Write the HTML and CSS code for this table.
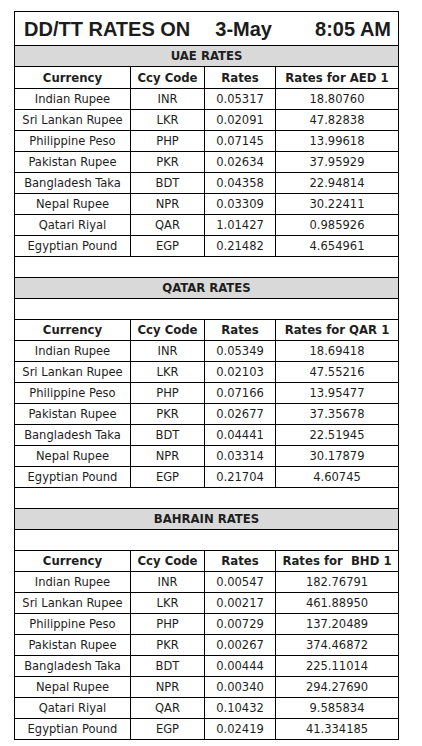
FILE: index.html
```html
<!DOCTYPE html>
<html>
<head>
<meta charset="utf-8">
<link rel="stylesheet" href="styles.css">
</head>
<body>
<table class="rates">
  <colgroup>
    <col class="c1"><col class="c2"><col class="c3"><col class="c4">
  </colgroup>
  <tr class="title-row">
    <td colspan="4" class="title">
      <div class="title-inner">
        <span>DD/TT RATES ON</span>
        <span class="date">3-May</span>
        <span class="time">8:05 AM</span>
      </div>
    </td>
  </tr>

  <tr class="sec"><td colspan="4">UAE RATES</td></tr>
  <tr class="head head-tall"><td>Currency</td><td>Ccy Code</td><td>Rates</td><td>Rates for AED 1</td></tr>
  <tr><td>Indian Rupee</td><td>INR</td><td>0.05317</td><td>18.80760</td></tr>
  <tr><td>Sri Lankan Rupee</td><td>LKR</td><td>0.02091</td><td>47.82838</td></tr>
  <tr><td>Philippine Peso</td><td>PHP</td><td>0.07145</td><td>13.99618</td></tr>
  <tr><td>Pakistan Rupee</td><td>PKR</td><td>0.02634</td><td>37.95929</td></tr>
  <tr><td>Bangladesh Taka</td><td>BDT</td><td>0.04358</td><td>22.94814</td></tr>
  <tr><td>Nepal Rupee</td><td>NPR</td><td>0.03309</td><td>30.22411</td></tr>
  <tr><td>Qatari Riyal</td><td>QAR</td><td>1.01427</td><td>0.985926</td></tr>
  <tr><td>Egyptian Pound</td><td>EGP</td><td>0.21482</td><td>4.654961</td></tr>
  <tr class="blank"><td colspan="4"></td></tr>

  <tr class="sec"><td colspan="4">QATAR RATES</td></tr>
  <tr class="blank"><td colspan="4"></td></tr>
  <tr class="head"><td>Currency</td><td>Ccy Code</td><td>Rates</td><td>Rates for QAR 1</td></tr>
  <tr><td>Indian Rupee</td><td>INR</td><td>0.05349</td><td>18.69418</td></tr>
  <tr><td>Sri Lankan Rupee</td><td>LKR</td><td>0.02103</td><td>47.55216</td></tr>
  <tr><td>Philippine Peso</td><td>PHP</td><td>0.07166</td><td>13.95477</td></tr>
  <tr><td>Pakistan Rupee</td><td>PKR</td><td>0.02677</td><td>37.35678</td></tr>
  <tr><td>Bangladesh Taka</td><td>BDT</td><td>0.04441</td><td>22.51945</td></tr>
  <tr><td>Nepal Rupee</td><td>NPR</td><td>0.03314</td><td>30.17879</td></tr>
  <tr><td>Egyptian Pound</td><td>EGP</td><td>0.21704</td><td>4.60745</td></tr>
  <tr class="blank"><td colspan="4"></td></tr>

  <tr class="sec"><td colspan="4">BAHRAIN RATES</td></tr>
  <tr class="blank"><td colspan="4"></td></tr>
  <tr class="head"><td>Currency</td><td>Ccy Code</td><td>Rates</td><td>Rates for&nbsp; BHD 1</td></tr>
  <tr><td>Indian Rupee</td><td>INR</td><td>0.00547</td><td>182.76791</td></tr>
  <tr><td>Sri Lankan Rupee</td><td>LKR</td><td>0.00217</td><td>461.88950</td></tr>
  <tr><td>Philippine Peso</td><td>PHP</td><td>0.00729</td><td>137.20489</td></tr>
  <tr><td>Pakistan Rupee</td><td>PKR</td><td>0.00267</td><td>374.46872</td></tr>
  <tr><td>Bangladesh Taka</td><td>BDT</td><td>0.00444</td><td>225.11014</td></tr>
  <tr><td>Nepal Rupee</td><td>NPR</td><td>0.00340</td><td>294.27690</td></tr>
  <tr><td>Qatari Riyal</td><td>QAR</td><td>0.10432</td><td>9.585834</td></tr>
  <tr><td>Egyptian Pound</td><td>EGP</td><td>0.02419</td><td>41.334185</td></tr>
</table>
</body>
</html>
```
FILE: styles.css
```css
html, body {
  margin: 0;
  padding: 0;
  background: #ffffff;
}
body {
  padding: 11px 0 0 14px;
}
.rates {
  border-collapse: collapse;
  table-layout: fixed;
  width: 384px;
  font-family: "DejaVu Sans Condensed", "DejaVu Sans", sans-serif;
  font-size: 12.8px;
  color: #1e1e1e;
}
.c1 { width: 116px; }
.c2 { width: 74px; }
.c3 { width: 71px; }
.c4 { width: 123px; }
.rates td {
  border: 1px solid #000;
  padding: 0;
  height: 20px;
  line-height: 14px;
  text-align: center;
  vertical-align: middle;
  white-space: nowrap;
  overflow: hidden;
}
.title-row td {
  height: 33px;
}
.title-inner {
  display: flex;
  align-items: center;
  padding: 0 7px 0 9px;
  font-family: "Liberation Sans", Arial, sans-serif;
  font-weight: bold;
  font-size: 20px;
  line-height: 24px;
  color: #1c1c1c;
}
.title-inner .date { margin-left: 25px; }
.title-inner .time { margin-left: auto; }
.sec td {
  background: #d9d9d9;
  font-weight: bold;
  font-size: 13px;
}
.head td {
  font-weight: bold;
  font-size: 13px;
}
.head-tall td {
  height: 21px;
}
```
